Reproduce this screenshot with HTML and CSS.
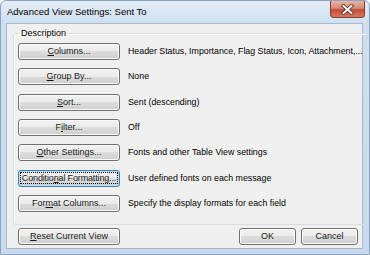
FILE: index.html
```html
<!DOCTYPE html>
<html>
<head lang="en">
    <meta charset="UTF-8">
    <title>Advanced View Settings</title>
    <link rel="stylesheet" href="styles.css">
</head>
<body>
<div class="window">
    <div class="titlebar">
        <span class="title">Advanced View Settings: Sent To</span>
        <span class="close">
            <svg width="13" height="11" viewBox="0 0 13 11">
                <path d="M2.5 2 L10.5 9 M10.5 2 L2.5 9" stroke="#4a2a22" stroke-width="3.6" stroke-linecap="square"/>
                <path d="M2.5 2 L10.5 9 M10.5 2 L2.5 9" stroke="#ffffff" stroke-width="2" stroke-linecap="square"/>
            </svg>
        </span>
    </div>
    <div class="client">
        <fieldset class="group">
            <legend>Description</legend>
            <div class="rows">
                <div class="row"><button class="btn"><u>C</u>olumns...</button><span class="desc">Header Status, Importance, Flag Status, Icon, Attachment,...</span></div>
                <div class="row"><button class="btn"><u>G</u>roup By...</button><span class="desc">None</span></div>
                <div class="row"><button class="btn"><u>S</u>ort...</button><span class="desc">Sent (descending)</span></div>
                <div class="row"><button class="btn">F<u>i</u>lter...</button><span class="desc">Off</span></div>
                <div class="row"><button class="btn"><u>O</u>ther Settings...</button><span class="desc">Fonts and other Table View settings</span></div>
                <div class="row"><button class="btn btn-default"><span class="focus">Conditio<u>n</u>al Formatting...</span></button><span class="desc">User defined fonts on each message</span></div>
                <div class="row"><button class="btn">For<u>m</u>at Columns...</button><span class="desc">Specify the display formats for each field</span></div>
            </div>
        </fieldset>
        <div class="footer">
            <button class="btn"><u>R</u>eset Current View</button>
            <div class="actions">
                <button class="btn btn-small">OK</button>
                <button class="btn btn-small">Cancel</button>
            </div>
        </div>
    </div>
</div>
</body>
</html>
```

FILE: styles.css
```css
html, body {
    margin: 0;
    padding: 0;
    background: #ffffff;
}
.window {
    width: 370px;
    height: 255px;
    box-sizing: border-box;
    border: 1px solid #8ea3bd;
    border-radius: 6px 6px 0 0;
    background: linear-gradient(#e2ecf7 0, #cedff1 24px, #c8daee 100%);
    font-family: "Liberation Sans", Arial, sans-serif;
    display: flex;
    flex-direction: column;
    overflow: hidden;
}
.titlebar {
    height: 22px;
    display: flex;
    justify-content: space-between;
    align-items: flex-start;
}
.title {
    padding: 5px 0 0 6px;
    font-size: 9.5px;
    color: #000000;
}
.close {
    width: 35px;
    height: 17px;
    margin-right: 4px;
    box-sizing: border-box;
    border: 1px solid #8a3a2e;
    border-top: none;
    border-radius: 0 0 4px 4px;
    background: linear-gradient(#e8b4a6 0, #d88a76 45%, #c54a32 55%, #d77a60 100%);
    display: flex;
    align-items: center;
    justify-content: center;
}
.client {
    flex: 1;
    margin: 0 6px 5px 5px;
    border: 1px solid #a7b8cd;
    background: #f0f0f0;
    padding: 4px 4px 3px 6px;
    display: flex;
    flex-direction: column;
}
.group {
    margin: 0;
    padding: 4px 4px 4px 4px;
    border: 1px solid #d5dfe5;
    border-radius: 3px;
    box-shadow: inset 1px 1px 0 #ffffff;
}
.group legend {
    padding: 0 2px;
    margin-left: 1px;
    font-size: 9px;
    line-height: 11px;
    color: #000000;
}
.rows {
    display: grid;
    grid-auto-rows: 25.33px;
}
.row {
    display: flex;
    align-items: flex-start;
    gap: 8px;
}
.btn {
    width: 102px;
    height: 17px;
    padding: 0;
    box-sizing: border-box;
    border: 1px solid #707070;
    border-radius: 3px;
    background: linear-gradient(#f2f2f2 0, #ebebeb 50%, #dddddd 50%, #cfcfcf 100%);
    box-shadow: inset 0 0 0 1px #fbfbfb;
    font-family: "Liberation Sans", Arial, sans-serif;
    font-size: 9px;
    color: #1a1a1a;
    line-height: 15px;
    text-align: center;
    white-space: nowrap;
}
.btn-default {
    border-color: #3c7fb1;
    box-shadow: inset 0 0 0 1px #b8e0f8;
}
.btn .focus {
    outline: 1px dotted #000000;
    outline-offset: 0;
    padding: 0 1px;
    letter-spacing: -0.15px;
}
.btn-small {
    width: 57px;
}
.desc {
    font-size: 8.8px;
    line-height: 17px;
    color: #000000;
    white-space: nowrap;
}
.footer {
    margin-top: auto;
    padding-left: 5px;
    display: flex;
    justify-content: space-between;
}
.actions {
    display: flex;
    gap: 5px;
}
```
